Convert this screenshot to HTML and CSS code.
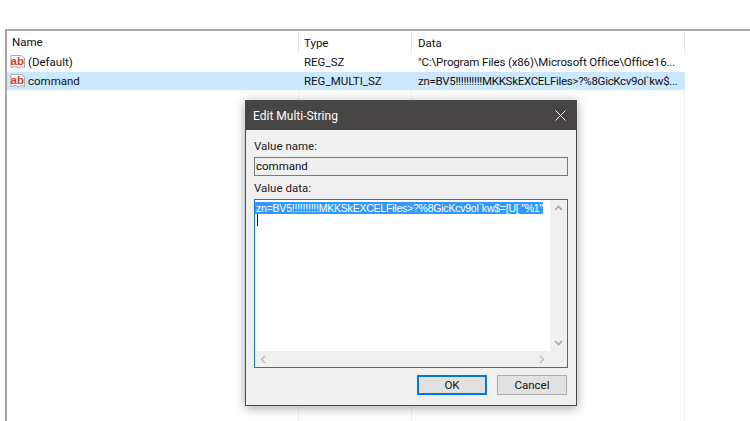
FILE: index.html
```html
<!DOCTYPE html>
<html lang="en">
<head>
<meta charset="utf-8">
<title>Edit Multi-String</title>
<link rel="stylesheet" href="styles.css">
</head>
<body>
<div class="page">
  <div class="list">
    <div class="row head">
      <div class="c name">Name</div>
      <div class="c type">Type</div>
      <div class="c data">Data</div>
    </div>
    <div class="row">
      <div class="c name"><svg class="ab" viewBox="0 0 16 16"><path d="M1 1.500h10l3.500 2.500v9.500l-3-1-3 1.500-3-1.500-4.500 1z" fill="#fff" stroke="#a9a9a9"/><text x=".5" y="10.500" class="abt">ab</text></svg><span>(Default)</span></div>
      <div class="c type">REG_SZ</div>
      <div class="c data slim">"C:\Program Files (x86)\Microsoft Office\Office16...</div>
    </div>
    <div class="row sel">
      <div class="c name"><svg class="ab" viewBox="0 0 16 16"><path d="M1 1.500h10l3.500 2.500v9.500l-3-1-3 1.500-3-1.500-4.500 1z" fill="#fff" stroke="#a9a9a9"/><text x=".5" y="10.500" class="abt">ab</text></svg><span>command</span></div>
      <div class="c type">REG_MULTI_SZ</div>
      <div class="c data tight">zn=BV5!!!!!!!!!!MKKSkEXCELFiles&gt;?%8GicKcv9ol`kw$...</div>
    </div>
    <div class="row fill">
      <div class="c name"></div>
      <div class="c type"></div>
      <div class="c data"></div>
    </div>
  </div>

  <div class="dialog">
    <div class="titlebar">
      <span>Edit Multi-String</span>
      <svg class="close" viewBox="0 0 11 11"><path d="M.5.500l10 10M10.500.500l-10 10" stroke="#fff" fill="none"/></svg>
    </div>
    <div class="body">
      <div class="label">Value name:</div>
      <div class="namebox">command</div>
      <div class="label second">Value data:</div>
      <div class="databox">
        <div class="textarea">
          <div class="text">
            <span class="selected">zn=BV5!!!!!!!!!!MKKSkEXCELFiles&gt;?%8GicKcv9ol`kw$=[U[ "%1"</span>
            <i class="caret"></i>
          </div>
          <div class="vbar">
            <svg class="arrow" viewBox="0 0 9 6"><path d="M1 5l3.500-3.500L8 5" stroke="#a6a6a6" stroke-width="1.600" fill="none"/></svg>
            <svg class="arrow" viewBox="0 0 9 6"><path d="M1 1l3.500 3.500L8 1" stroke="#a6a6a6" stroke-width="1.600" fill="none"/></svg>
          </div>
        </div>
        <div class="hbar">
          <svg class="arrow-h" viewBox="0 0 6 9"><path d="M5 1L1.500 4.500 5 8" stroke="#bdbdbd" stroke-width="1.600" fill="none"/></svg>
          <svg class="arrow-h" viewBox="0 0 6 9"><path d="M1 1l3.500 3.500L1 8" stroke="#bdbdbd" stroke-width="1.600" fill="none"/></svg>
        </div>
      </div>
      <div class="buttons">
        <div class="btn default">OK</div>
        <div class="btn">Cancel</div>
      </div>
    </div>
  </div>
</div>
</body>
</html>
```
FILE: styles.css
```css
* { box-sizing: border-box; }
html, body { margin: 0; height: 100%; overflow: hidden; background: #fff; }
body { font-family: Roboto, "Noto Sans", sans-serif; font-size: 11.500px; color: #111; }
.page { position: relative; width: 750px; height: 421px; padding-top: 29px; }
.list {
  height: 392px;
  margin-left: 5px;
  border-top: 2px solid #a6a6ac;
  border-left: 2px solid #a6a6ac;
  display: flex;
  flex-direction: column;
}
.row { display: flex; width: 678px; height: 18.500px; line-height: 18px; white-space: nowrap; }
.head { height: 22px; line-height: 24px; }
.c { overflow: hidden; }
.name { width: 292px; display: flex; align-items: center; gap: 2px; padding-left: 3px; }
.type { width: 113px; padding-left: 5px; }
.data { width: 273px; padding-left: 6px; }
.slim { letter-spacing: -.14px; }
.tight { letter-spacing: -.3px; }
.head .name { padding-left: 5px; border-right: 1px solid #e5e5e5; }
.head .type { border-right: 1px solid #e5e5e5; }
.head .data { border-right: 1px solid #e5e5e5; }
.sel { background: #cce8ff; }
.fill { flex: 1; }
.fill .c { border-right: 1px solid #e9f1fb; }
.ab { width: 16px; height: 16px; flex: none; }
.abt { font-family: "Liberation Sans", sans-serif; font-weight: 700; font-size: 11.500px; fill: #d13b1f; }

.dialog {
  position: absolute;
  left: 245px;
  top: 100px;
  width: 332px;
  height: 306px;
  border: 1px solid #4a4a4a;
  background: #f0f0f0;
  box-shadow: 0 2px 10px rgba(0,0,0,.35);
  display: flex;
  flex-direction: column;
}
.titlebar {
  height: 29px;
  flex: none;
  background: #474645;
  color: #fff;
  font-size: 12px;
  display: flex;
  align-items: center;
  justify-content: space-between;
  padding: 0 10px 0 7px;
}
.close { width: 11px; height: 11px; }
.body { flex: 1; padding: 8px 8px 0; display: flex; flex-direction: column; }
.label { height: 16px; line-height: 16px; color: #222; }
.namebox {
  height: 19px;
  margin-top: 3px;
  border: 1px solid #7a7a7a;
  background: #efefef;
  line-height: 17px;
  padding-left: 1px;
}
.second { margin-top: 4px; }
.databox {
  height: 169px;
  margin-top: 3px;
  border: 1px solid #0f7ad8;
  display: flex;
  flex-direction: column;
}
.textarea { flex: 1; display: flex; min-height: 0; background: #fff; }
.text { flex: 1; font-family: "Liberation Sans", sans-serif; font-size: 10.500px; line-height: 12px; padding-top: 2px; white-space: nowrap; overflow: hidden; }
.selected { display: table; background: #3399ff; color: #fff; letter-spacing: -.22px; padding-left: 1px; }
.caret { display: block; width: 1px; height: 12px; background: #111; margin-left: 2px; }
.vbar { width: 17px; background: #f0f0f0; display: flex; flex-direction: column; justify-content: space-between; align-items: center; padding: 5px 0 5px; }
.arrow { width: 9px; height: 6px; }
.hbar { height: 16px; flex: none; background: #f0f0f0; display: flex; justify-content: space-between; align-items: center; padding: 0 22px 0 5px; }
.arrow-h { width: 6px; height: 9px; }
.buttons { display: flex; justify-content: flex-end; gap: 10px; margin-top: 7px; padding-right: 1px; }
.btn { width: 70px; height: 20px; border: 1px solid #adadad; background: #e1e1e1; text-align: center; line-height: 18px; }
.btn.default { border: 2px solid #0078d7; line-height: 16px; }
```
